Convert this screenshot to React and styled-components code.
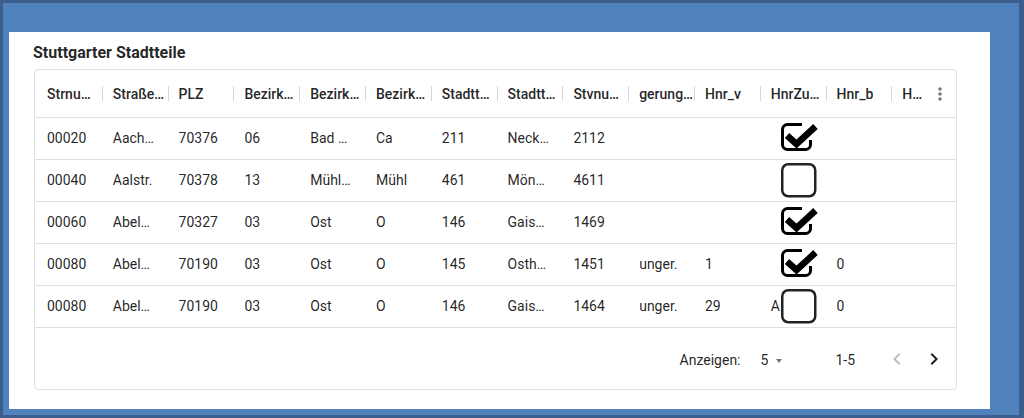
import React from "react";
import styled, { createGlobalStyle } from "styled-components";

const GlobalStyle = createGlobalStyle`
  html, body { margin: 0; padding: 0; }
  body { font-family: Roboto, "Liberation Sans", Arial, sans-serif; background: #4f81bd; }
  * { box-sizing: border-box; }
`;

const Frame = styled.div`
  width: 1024px;
  height: 418px;
  background: #4f81bd;
  border-style: solid;
  border-color: #3b5e8c;
  border-width: 3px 5px 3px 3px;
  padding: 29px 29px 6px 6px;
`;

const Panel = styled.div`
  width: 981px;
  height: 100%;
  background: #ffffff;
  padding: 11px 33px 19px 25px;
  display: flex;
  flex-direction: column;
`;

const Title = styled.h2`
  margin: 0 0 6px -1px;
  font-size: 16px;
  line-height: 20px;
  font-weight: 700;
  color: rgba(0, 0, 0, 0.87);
`;

const Card = styled.div`
  flex: 1;
  border: 1px solid #e0e0e0;
  border-radius: 4px;
  overflow: hidden;
  display: flex;
  flex-direction: column;
  color: rgba(0, 0, 0, 0.87);
  font-size: 14px;
`;

const HeaderRow = styled.div`
  display: flex;
  height: 48px;
  padding-left: 2px;
  border-bottom: 1px solid #e0e0e0;
  flex-shrink: 0;
`;

const HeaderCell = styled.div`
  width: 65.8px;
  flex-shrink: 0;
  display: flex;
  align-items: center;
  padding-left: 10px;
  padding-right: ${(p) => (p.$last ? "8px" : "0")};
`;

const HeaderTitle = styled.span`
  flex: 1;
  font-weight: 500;
  white-space: nowrap;
  overflow: hidden;
`;

const Separator = styled.span`
  width: 1px;
  height: 15px;
  background: #d6d6d6;
  flex-shrink: 0;
`;

const MenuIcon = styled.svg`
  width: 20px;
  height: 20px;
  fill: #757575;
  flex-shrink: 0;
`;

const Row = styled.div`
  display: flex;
  height: 42px;
  padding-left: 2px;
  border-bottom: 1px solid #e0e0e0;
  flex-shrink: 0;
`;

const Cell = styled.div`
  width: 65.8px;
  flex-shrink: 0;
  display: flex;
  align-items: center;
  padding-left: 10px;
  padding-bottom: 1px;
  white-space: nowrap;
  overflow: ${(p) => (p.$visible ? "visible" : "hidden")};
`;

const ValueSlot = styled.span`
  width: 10px;
  flex-shrink: 0;
`;

const CheckedSvg = styled.svg`
  width: 40px;
  height: 30px;
  margin-bottom: 3px;
  flex-shrink: 0;
  overflow: visible;
`;

const UncheckedSvg = styled.svg`
  width: 36px;
  height: 35px;
  flex-shrink: 0;
`;

const Footer = styled.div`
  flex: 1;
  display: flex;
  align-items: center;
  justify-content: flex-end;
  padding: 3px 10px 0 0;
  font-size: 14px;
`;

const FooterLabel = styled.span`
  margin-left: ${(p) => p.$gap || 0}px;
`;

const SelectArrow = styled.span`
  margin-left: 8px;
  width: 0;
  height: 0;
  border-left: 3.5px solid transparent;
  border-right: 3.5px solid transparent;
  border-top: 4px solid #757575;
  margin-top: 1px;
`;

const NavIcon = styled.svg`
  width: 24px;
  height: 24px;
  margin-left: ${(p) => p.$gap}px;
  margin-top: -3px;
  fill: ${(p) => (p.$disabled ? "rgba(0,0,0,0.26)" : "rgba(0,0,0,0.87)")};
`;

const CheckedIcon = () => (
  <CheckedSvg viewBox="0 0 40 30">
    <path
      d="M21 2.5 H6.5 A5 5 0 0 0 1.5 7.5 V22.5 A5 5 0 0 0 6.5 27.5 H24.5 A5 5 0 0 0 29.5 22.5 V18"
      fill="none"
      stroke="#000"
      strokeWidth="3"
    />
    <polyline
      points="6,13.5 15.5,22 34.5,4.5"
      fill="none"
      stroke="#000"
      strokeWidth="6.5"
      strokeLinejoin="miter"
    />
  </CheckedSvg>
);

const UncheckedIcon = () => (
  <UncheckedSvg viewBox="0 0 36 35">
    <rect x="1.25" y="1.25" width="33" height="32" rx="6" fill="none" stroke="#222" strokeWidth="2.5" />
  </UncheckedSvg>
);

const columns = [
  "Strnu…",
  "Straße…",
  "PLZ",
  "Bezirk…",
  "Bezirk…",
  "Bezirk…",
  "Stadtt…",
  "Stadtt…",
  "Stvnu…",
  "gerung…",
  "Hnr_v",
  "HnrZu…",
  "Hnr_b",
  "H…",
];

const rows = [
  ["00020", "Aach…", "70376", "06", "Bad …", "Ca", "211", "Neck…", "2112", "", "", { v: "", c: true }, "", ""],
  ["00040", "Aalstr.", "70378", "13", "Mühl…", "Mühl", "461", "Mön…", "4611", "", "", { v: "", c: false }, "", ""],
  ["00060", "Abel…", "70327", "03", "Ost", "O", "146", "Gais…", "1469", "", "", { v: "", c: true }, "", ""],
  ["00080", "Abel…", "70190", "03", "Ost", "O", "145", "Osth…", "1451", "unger.", "1", { v: "", c: true }, "0", ""],
  ["00080", "Abel…", "70190", "03", "Ost", "O", "146", "Gais…", "1464", "unger.", "29", { v: "A", c: false }, "0", ""],
];

export default function App() {
  return (
    <>
      <GlobalStyle />
      <Frame>
        <Panel>
          <Title>Stuttgarter Stadtteile</Title>
          <Card>
            <HeaderRow>
              {columns.map((c, i) => {
                const last = i === columns.length - 1;
                return (
                  <HeaderCell key={i} $last={last}>
                    <HeaderTitle>{c}</HeaderTitle>
                    {last ? (
                      <MenuIcon viewBox="0 0 24 24">
                        <path d="M12 8c1.1 0 2-.9 2-2s-.9-2-2-2-2 .9-2 2 .9 2 2 2zm0 2c-1.1 0-2 .9-2 2s.9 2 2 2 2-.9 2-2-.9-2-2-2zm0 6c-1.1 0-2 .9-2 2s.9 2 2 2 2-.9 2-2-.9-2-2-2z" />
                      </MenuIcon>
                    ) : (
                      <Separator />
                    )}
                  </HeaderCell>
                );
              })}
            </HeaderRow>
            {rows.map((r, ri) => (
              <Row key={ri}>
                {r.map((v, ci) =>
                  typeof v === "object" ? (
                    <Cell key={ci} $visible>
                      <ValueSlot>{v.v}</ValueSlot>
                      {v.c ? <CheckedIcon /> : <UncheckedIcon />}
                    </Cell>
                  ) : (
                    <Cell key={ci}>{v}</Cell>
                  )
                )}
              </Row>
            ))}
            <Footer>
              <FooterLabel>Anzeigen:</FooterLabel>
              <FooterLabel $gap={20}>5</FooterLabel>
              <SelectArrow />
              <FooterLabel $gap={53}>1-5</FooterLabel>
              <NavIcon $gap={30} $disabled viewBox="0 0 24 24">
                <path d="M15.41 16.59L10.83 12l4.58-4.59L14 6l-6 6 6 6 1.41-1.41z" />
              </NavIcon>
              <NavIcon $gap={13} viewBox="0 0 24 24">
                <path d="M8.59 16.59L13.17 12 8.59 7.41 10 6l6 6-6 6-1.41-1.41z" />
              </NavIcon>
            </Footer>
          </Card>
        </Panel>
      </Frame>
    </>
  );
}
